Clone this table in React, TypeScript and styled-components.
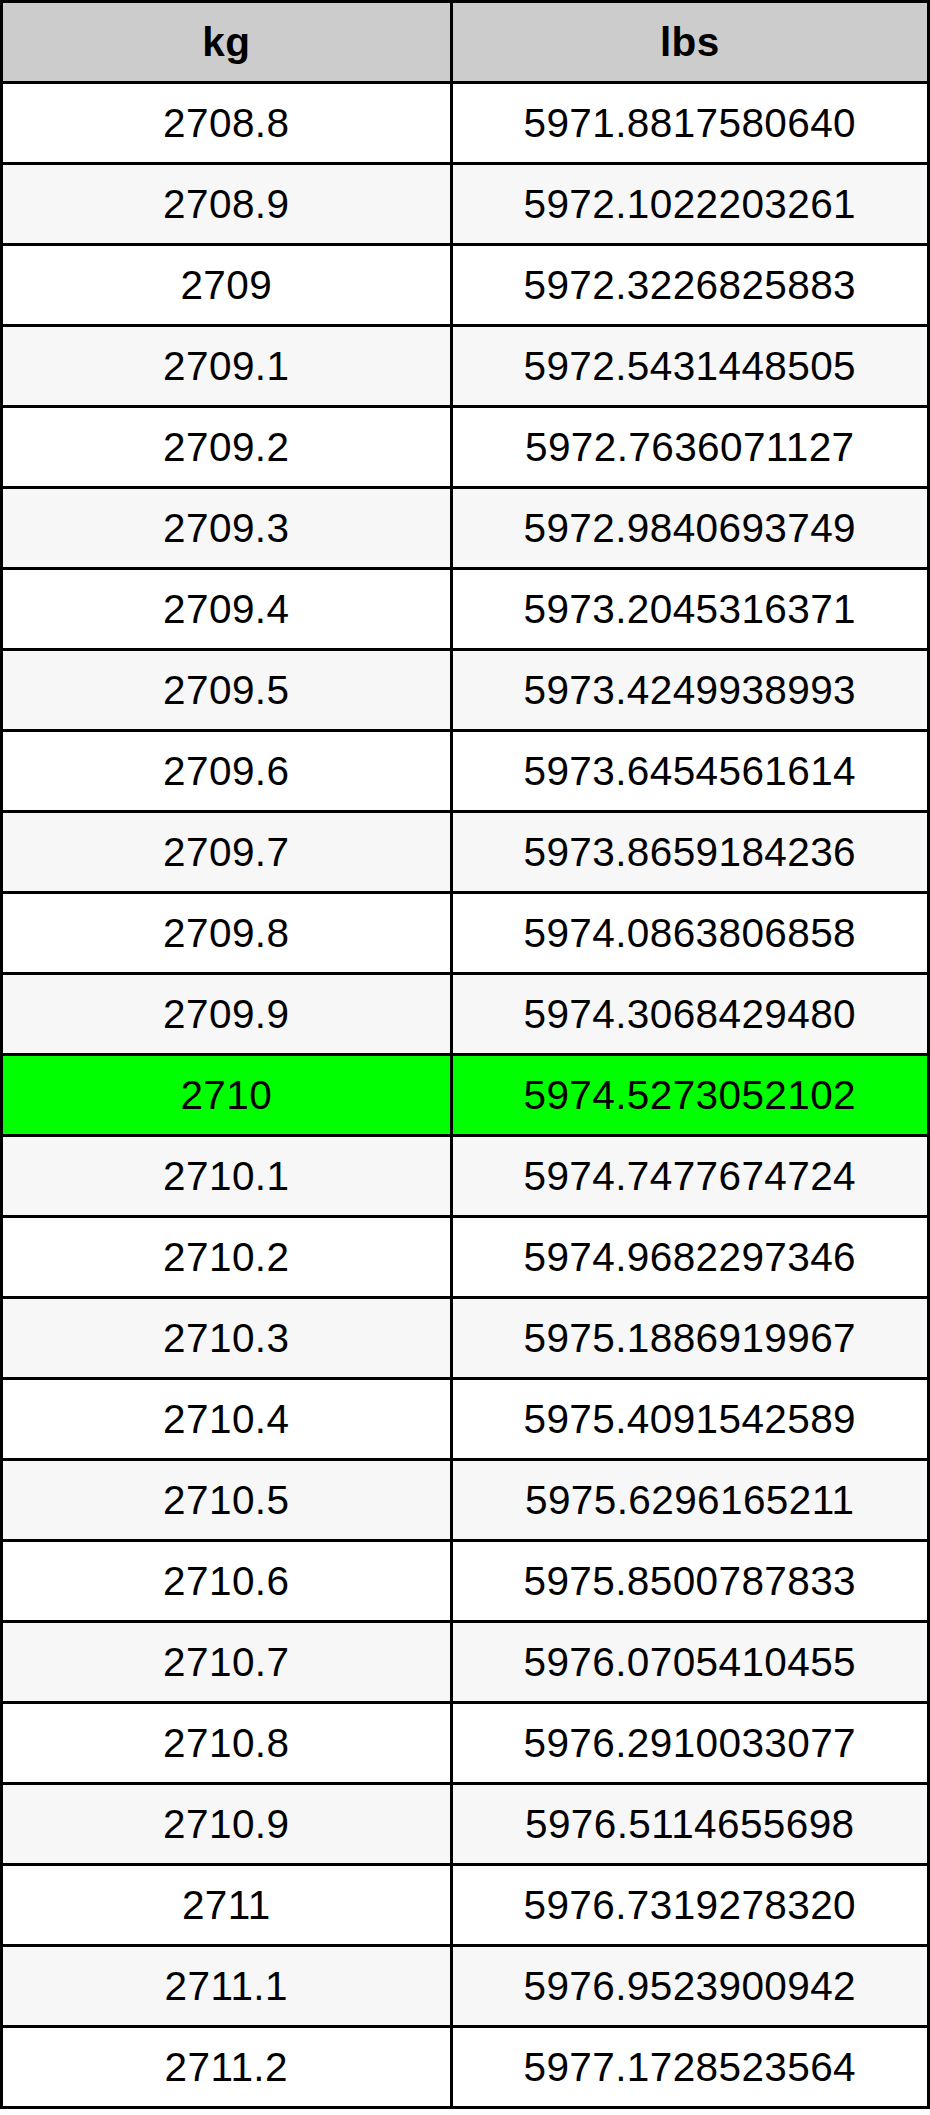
import styled, { createGlobalStyle } from "styled-components";

const GlobalStyle = createGlobalStyle`
  html, body {
    margin: 0;
    padding: 0;
    background: #ffffff;
  }
  body {
    font-family: "Liberation Sans", Arial, sans-serif;
    color: #000000;
  }
`;

const rows: [string, string][] = [
  ["2708.8", "5971.8817580640"],
  ["2708.9", "5972.1022203261"],
  ["2709", "5972.3226825883"],
  ["2709.1", "5972.5431448505"],
  ["2709.2", "5972.7636071127"],
  ["2709.3", "5972.9840693749"],
  ["2709.4", "5973.2045316371"],
  ["2709.5", "5973.4249938993"],
  ["2709.6", "5973.6454561614"],
  ["2709.7", "5973.8659184236"],
  ["2709.8", "5974.0863806858"],
  ["2709.9", "5974.3068429480"],
  ["2710", "5974.5273052102"],
  ["2710.1", "5974.7477674724"],
  ["2710.2", "5974.9682297346"],
  ["2710.3", "5975.1886919967"],
  ["2710.4", "5975.4091542589"],
  ["2710.5", "5975.6296165211"],
  ["2710.6", "5975.8500787833"],
  ["2710.7", "5976.0705410455"],
  ["2710.8", "5976.2910033077"],
  ["2710.9", "5976.5114655698"],
  ["2711", "5976.7319278320"],
  ["2711.1", "5976.9523900942"],
  ["2711.2", "5977.1728523564"],
];

export default function App() {
  return (
    <>
      <GlobalStyle />
      <Table>
        <colgroup>
          <col style={{ width: "449.5px" }} />
          <col />
        </colgroup>
        <thead>
          <tr>
            <HeadCell>kg</HeadCell>
            <HeadCell>lbs</HeadCell>
          </tr>
        </thead>
        <tbody>
          {rows.map(([kg, lbs], i) => (
            <Row key={kg} $alt={i % 2 === 1} $active={kg === "2710"}>
              <Cell>{kg}</Cell>
              <Cell>{lbs}</Cell>
            </Row>
          ))}
        </tbody>
      </Table>
    </>
  );
}

// ====== Styled ======
const Table = styled.table`
  width: 930px;
  table-layout: fixed;
  border-collapse: collapse;
  border: 3px solid #000;
`;

const HeadCell = styled.th`
  height: 78px;
  padding: 0;
  background: #cccccc;
  border: 3px solid #000;
  font-size: 40.5px;
  line-height: 44px;
  font-weight: bold;
  letter-spacing: 0.4px;
  text-align: center;
  vertical-align: middle;
`;

const Row = styled.tr<{ $alt: boolean; $active: boolean }>`
  background: ${(p) => (p.$active ? "#00ff00" : p.$alt ? "#f7f7f7" : "#ffffff")};
`;

const Cell = styled.td`
  height: 78px;
  padding: 0;
  border: 3px solid #000;
  font-size: 40.5px;
  line-height: 44px;
  letter-spacing: 0.4px;
  text-align: center;
  vertical-align: middle;
`;
